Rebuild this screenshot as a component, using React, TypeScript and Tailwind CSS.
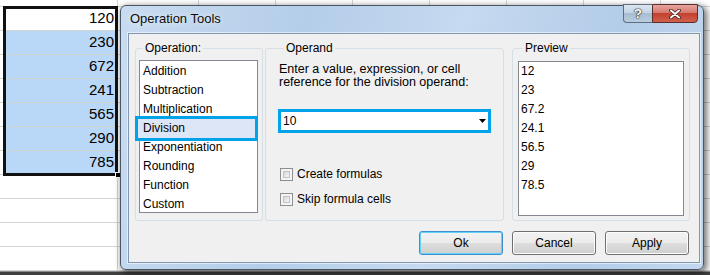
import React from 'react';

const values = ['120', '230', '672', '241', '565', '290', '785', '', '', '', ''];
const ops = ['Addition', 'Subtraction', 'Multiplication', 'Division', 'Exponentiation', 'Rounding', 'Function', 'Custom'];
const preview = ['12', '23', '67.2', '24.1', '56.5', '29', '78.5'];

function RestCells() {
  return (
    <>
      <div className="w-[81px] shrink-0 border-r border-[#d4d4d4]" />
      <div className="w-[77px] shrink-0 border-r border-[#d4d4d4]" />
      <div className="w-[77px] shrink-0 border-r border-[#d4d4d4]" />
      <div className="w-[77px] shrink-0 border-r border-[#d4d4d4]" />
      <div className="w-[77px] shrink-0 border-r border-[#d4d4d4]" />
      <div className="w-[77px] shrink-0 border-r border-[#d4d4d4]" />
      <div className="w-[77px] shrink-0 border-r border-[#d4d4d4]" />
      <div className="w-[77px] shrink-0 border-r border-[#d4d4d4]" />
    </>
  );
}

function Sheet() {
  return (
    <div className="flex flex-col">
      <div className="flex h-[7px] border-b border-[#d4d4d4]">
        <div className="w-[4px] shrink-0" />
        <div className="w-[114px] shrink-0 border-r border-[#d4d4d4]" />
        <RestCells />
      </div>
      {values.map((v, i) => (
        <div key={i} className="flex h-[24px] border-b border-[#d4d4d4]">
          <div className="w-[4px] shrink-0" />
          <div
            className={
              i >= 1 && i <= 6
                ? 'w-[114px] shrink-0 border-r border-[#d4d4d4] bg-[#b9d7f7] flex items-center justify-end pr-[3px] text-[15px] text-black'
                : 'w-[114px] shrink-0 border-r border-[#d4d4d4] bg-white flex items-center justify-end pr-[3px] text-[15px] text-black'
            }
          >
            {v}
          </div>
          <RestCells />
        </div>
      ))}
      <div className="h-[4px] bg-[#3f3f3f] border-t border-[#8a8a8a]" />
    </div>
  );
}

function Check({ label, first }: { label: string; first?: boolean }) {
  return (
    <div className={first ? 'flex items-center h-[15px] ml-[2px] mt-[34px]' : 'flex items-center h-[15px] ml-[2px] mt-[10px]'}>
      <div className="w-[13px] h-[13px] shrink-0 border border-[#8e8f8f] bg-[#f4f4f4] p-[2px]">
        <div className="w-full h-full border border-[#c0c4ca] bg-gradient-to-br from-[#d3d6db] to-[#f8f8f8]" />
      </div>
      <span className="ml-[4px] text-[12px] leading-[15px] text-black">{label}</span>
    </div>
  );
}

function Btn({ label, primary }: { label: string; primary?: boolean }) {
  return (
    <div
      className={
        primary
          ? 'w-[84px] h-[24px] rounded-[3px] border border-[#3c8fd0] bg-[linear-gradient(180deg,#f2f2f2_0%,#ebebeb_50%,#dddddd_51%,#cfcfcf_100%)] shadow-[inset_0_0_0_1px_#62d2f7] flex items-center justify-center text-[12px] text-black'
          : 'w-[84px] h-[24px] rounded-[3px] border border-[#707070] bg-[linear-gradient(180deg,#f2f2f2_0%,#ebebeb_50%,#dddddd_51%,#cfcfcf_100%)] shadow-[inset_0_0_0_1px_#fcfcfc] flex items-center justify-center text-[12px] text-black'
      }
    >
      {label}
    </div>
  );
}

function Dialog() {
  return (
    <div className="absolute left-[120px] top-[5px] w-[584px] h-[265px] rounded-[6px] border border-[#4b5664] bg-[linear-gradient(100deg,#c8dcf1_0%,#b4cde9_30%,#c6daf0_55%,#b3cce8_80%,#c3d8ef_100%)] shadow-[2px_2px_6px_1px_rgba(0,0,0,0.55)] flex flex-col">
      <div className="h-[27px] shrink-0 flex items-start pl-[9px] pr-[5px]">
        <div className="mt-[5px] flex-1 text-[13px] leading-[16px] text-[#0d0d0d] [text-shadow:0_0_6px_rgba(255,255,255,0.9)]">Operation Tools</div>
        <div className="flex -mt-[2px] h-[19px]">
          <div className="w-[29px] h-[19px] rounded-bl-[4px] border border-[#5f6e80] border-r-0 bg-[linear-gradient(180deg,#dbe6f1_0%,#c5d4e4_45%,#a9bed3_50%,#b9cce0_100%)] flex items-center justify-center text-[13px] font-bold leading-[13px] text-white [text-shadow:0_0_1px_#222,0_0_1px_#222,0_0_2px_#333]">
            ?
          </div>
          <div className="w-[46px] h-[19px] rounded-br-[4px] border border-[#5a2c2c] bg-[linear-gradient(180deg,#e7a59c_0%,#d57a6e_45%,#c2412f_50%,#d0604c_100%)] flex items-center justify-center">
            <svg width="12" height="10" viewBox="0 0 12 10">
              <path d="M2 1.5 L10 8.5 M10 1.5 L2 8.5" stroke="#3a1a1a" strokeWidth="3.6" strokeLinecap="round" />
              <path d="M2 1.5 L10 8.5 M10 1.5 L2 8.5" stroke="#ffffff" strokeWidth="2" strokeLinecap="round" />
            </svg>
          </div>
        </div>
      </div>
      <div className="flex-1 pl-[7px] pr-[3px] pb-[6px]">
        <div className="h-full border border-[#8198b0] bg-[#f0f0f0] shadow-[0_0_0_1px_rgba(255,255,255,0.55)] flex flex-col pt-[7px] pl-[6px]">
          <div className="flex">
            <fieldset className="w-[128px] border border-[#d5dfe5] rounded-[3px] pl-[3px] pr-[4px] pb-[7px]">
              <legend className="ml-[4px] px-[2px] text-[12px] leading-[14px] text-black">Operation:</legend>
              <div className="mt-[5px] h-[153px] border border-[#828790] bg-white flex flex-col pt-[1px]">
                {ops.map((o) => (
                  <div key={o} className="relative h-[19px] shrink-0">
                    {o === 'Division' && (
                      <div className="absolute -left-[5px] -top-[3px] -bottom-[3px] -right-[1px] border-[3px] border-[#00a2e8] bg-[#dce6f7]" />
                    )}
                    <div className="relative pl-[3px] text-[12px] leading-[19px] text-black">{o}</div>
                  </div>
                ))}
              </div>
            </fieldset>
            <fieldset className="ml-[2px] w-[239px] border border-[#d5dfe5] rounded-[3px] pl-[12px] pr-[10px] pb-[13px]">
              <legend className="ml-[6px] px-[2px] text-[12px] leading-[14px] text-black">Operand</legend>
              <div className="mt-[8px] ml-[1px] text-[12.5px] leading-[13px] text-black whitespace-nowrap">
                Enter a value, expression, or cell
                <br />
                reference for the division operand:
              </div>
              <div className="mt-[20px] h-[24px] w-[213px] border-[3px] border-[#00a2e8] bg-white flex items-center pl-[2px] pr-[2px]">
                <span className="flex-1 text-[12px] leading-[14px] text-black">10</span>
                <svg width="7" height="4" viewBox="0 0 7 4">
                  <path d="M0 0 H7 L3.5 4 Z" fill="#000" />
                </svg>
              </div>
              <Check label="Create formulas" first />
              <Check label="Skip formula cells" />
            </fieldset>
            <fieldset className="ml-[8px] w-[178px] border border-[#d5dfe5] rounded-[3px] pl-[5px] pr-[5px] pb-[4px]">
              <legend className="ml-[5px] px-[2px] text-[12px] leading-[14px] text-black">Preview</legend>
              <div className="mt-[6px] h-[155px] border border-[#828790] bg-white flex flex-col">
                {preview.map((p) => (
                  <div key={p} className="h-[19px] shrink-0 pl-[2px] text-[12px] leading-[19px] text-black">
                    {p}
                  </div>
                ))}
              </div>
            </fieldset>
          </div>
          <div className="mt-[10px] flex justify-end gap-[9px] pr-[10px]">
            <Btn label="Ok" primary />
            <Btn label="Cancel" />
            <Btn label="Apply" />
          </div>
        </div>
      </div>
    </div>
  );
}

export default function App() {
  return (
    <div className="relative w-[710px] h-[275px] overflow-hidden bg-white font-['Liberation_Sans',Arial,sans-serif]">
      <Sheet />
      <div className="absolute left-[3px] top-[6px] w-[115px] h-[170px] border-[3px] border-[#111]" />
      <div className="absolute left-[115px] top-[172px] w-[6px] h-[6px] bg-black border border-white" />
      <Dialog />
    </div>
  );
}
